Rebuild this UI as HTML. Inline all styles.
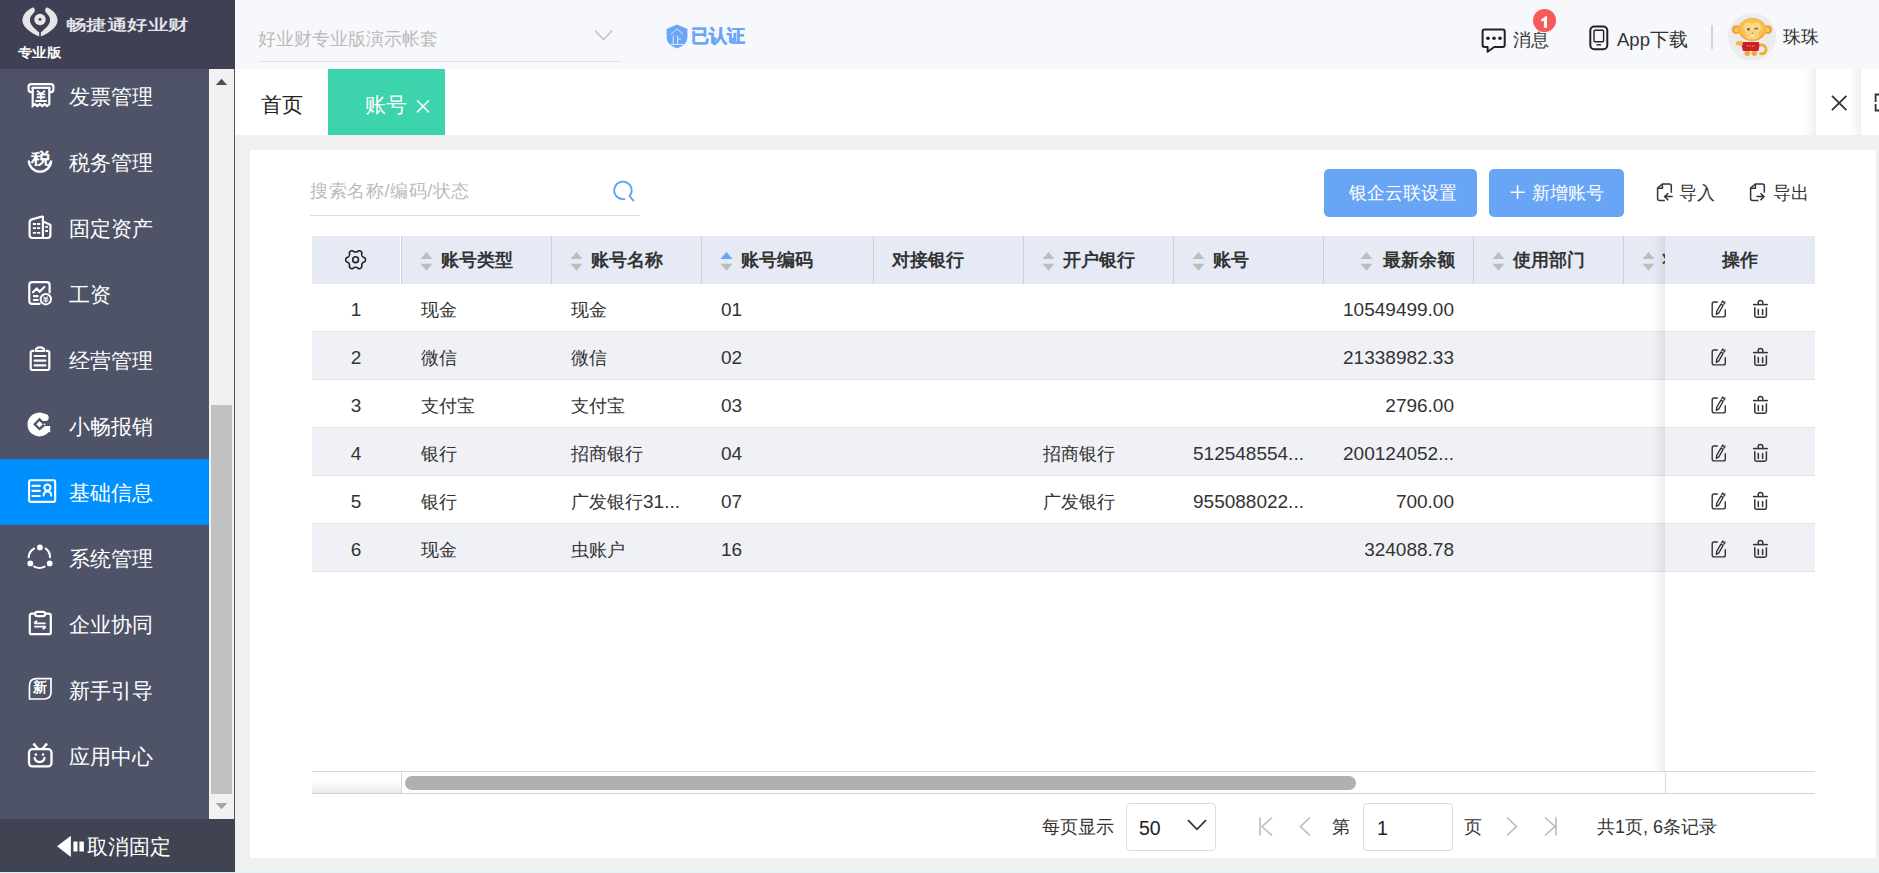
<!DOCTYPE html>
<html><head><meta charset="utf-8">
<style>
*{box-sizing:border-box}
html,body{margin:0;padding:0}
body{width:1879px;height:873px;overflow:hidden;position:relative;background:#f0f0f0;font-family:"Liberation Sans",sans-serif;color:#333}
.a{position:absolute;white-space:nowrap}
svg{position:absolute;overflow:visible}
#side{left:0;top:0;width:235px;height:873px;background:#4e5368}
.mi{position:absolute;left:0;width:209px;height:66px}
.mi .t{position:absolute;left:69px;top:1px;line-height:66px;font-size:21px;color:#fff;font-weight:500}
.mi svg{left:20px;top:12px;width:40px;height:40px}
#hdr{left:235px;top:0;width:1644px;height:69px;background:#f7f8fc}
#tabs{left:235px;top:69px;width:1644px;height:66px;background:#fff}
#card{left:250px;top:150px;width:1626px;height:708px;background:#fff}
.th{position:absolute;top:236px;height:48px;background:#e6eaf4}
.hd{position:absolute;top:236px;line-height:48px;font-size:18px;font-weight:bold;color:#333}
.row{position:absolute;left:312px;width:1353px;height:48px;border-bottom:1px solid #e4e4e4}
.c{position:absolute;font-size:18px;color:#333;line-height:48px}
</style></head>
<body>
<!-- SIDEBAR -->
<div id="side" class="a">
  <div class="a" style="left:0;top:0;width:235px;height:69px;background:#404055"></div>
  <!-- logo -->
  <svg style="left:20px;top:5px;width:40px;height:36px" viewBox="0 0 40 36">
    <path d="M12.2 2.7 C7.2 5 2.4 9.6 2.4 15.6 C2.4 21.6 10 27.6 19.1 31.6 L19.2 27.4 C13.4 22.6 9.9 19 9.9 15 C9.9 11.8 12.1 9.4 14.3 7.2 C15.6 5.2 14.4 2 12.2 2.7 Z" fill="#e6e6e9"/>
    <path d="M27.8 2.7 C32.8 5 37.6 9.6 37.6 15.6 C37.6 21.6 30 27.6 20.9 31.6 L20.8 27.4 C26.6 22.6 30.1 19 30.1 15 C30.1 11.8 27.9 9.4 25.7 7.2 C24.4 5.2 25.6 2 27.8 2.7 Z" fill="#e6e6e9"/>
    <circle cx="20" cy="14.5" r="5.7" fill="#e8e8ea"/>
    <circle cx="20" cy="14.5" r="1.4" fill="#404055"/>
  </svg>
  <div class="a" style="left:66px;top:12.5px;font-size:15px;line-height:24px;color:#ececef;font-weight:400;-webkit-text-stroke:0.35px #ececef;transform:scaleX(1.365);transform-origin:0 0">畅捷通好业财</div>
  <div class="a" style="left:18px;top:43px;font-size:13px;line-height:20px;color:#fff;font-weight:bold;transform:scaleX(1.11);transform-origin:0 0">专业版</div>

  <!-- menu items -->
  <div class="mi" style="top:63px">
    <svg viewBox="0 0 40 40" fill="none" stroke="#fff" stroke-width="2.2">
      <path d="M12 17.2 H10.8 A2.6 2.6 0 0 1 8.6 14.6 V11.8 A2.6 2.6 0 0 1 11.2 9.2 H30.8 A2.6 2.6 0 0 1 33.4 11.8 V14.6 A2.6 2.6 0 0 1 30.8 17.2 H30"/>
      <path d="M11.5 12.8 H30.5"/>
      <path d="M12.7 12.8 V31 L15 29.2 L17.4 31 L19.8 29.2 L22.2 31 L24.6 29.2 L27 31 L29.3 29.2 V12.8"/>
      <path d="M17 15.6 L21 19 L25 15.6 M16.8 19.4 H25.2 M16.8 22.2 H25.2 M21 19 V24.5 M15.2 26 H26.8" stroke-width="1.9"/>
    </svg>
    <div class="t">发票管理</div>
  </div>
  <div class="mi" style="top:129px">
    <svg viewBox="0 0 40 40" fill="none" stroke="#fff" stroke-width="2.3">
      <path d="M8.8 19.5 A11.2 11.2 0 0 0 31.2 19.5"/>
    </svg>
    <div class="a" style="left:31px;top:19.5px;font-size:16px;line-height:20px;color:#fff;font-weight:900;transform:scaleX(1.26);transform-origin:0 0">税</div>
    <div class="t">税务管理</div>
  </div>
  <div class="mi" style="top:195px">
    <svg viewBox="0 0 40 40" fill="none" stroke="#fff" stroke-width="2.2" stroke-linejoin="round">
      <path d="M22.9 9.3 L12 12.4 Q9.6 13 9.6 15.5 V28 Q9.6 31 12.6 31 H27.5 Q30.4 31 30.4 28 V17.8 L23 14.6"/>
      <path d="M22.9 9 V31"/>
      <path d="M12.8 17 H16 M17 17 H20.2 M12.8 21.1 H16 M17 21.1 H20.2 M12.8 25.9 H16 M17 25.9 H20.2 M25.2 19.9 H28 M25.2 24 H28" stroke-width="1.9"/>
    </svg>
    <div class="t">固定资产</div>
  </div>
  <div class="mi" style="top:261px">
    <svg viewBox="0 0 40 40" fill="none" stroke="#fff" stroke-width="2.2" stroke-linecap="round" stroke-linejoin="round">
      <path d="M19.6 30.8 H12 Q9.3 30.8 9.3 28 V12 Q9.3 9.1 12 9.1 H27 Q29.6 9.1 29.6 12 V19.5"/>
      <path d="M13 19.3 L16.7 15.4 L19.6 18.8 L24.3 14"/>
      <path d="M13 23.1 H18.5 M13 27 H18.5" stroke-linecap="butt"/>
      <circle cx="25.8" cy="26.2" r="5.2" stroke-width="2"/>
      <path d="M23.6 23.6 L25.8 25.6 L28 23.6 M23.3 26 H28.3 M23.3 28 H28.3 M25.8 25.6 V29.5" stroke-width="1.1" stroke-linecap="butt"/>
    </svg>
    <div class="t">工资</div>
  </div>
  <div class="mi" style="top:327px">
    <svg viewBox="0 0 40 40" fill="none" stroke="#fff" stroke-width="2.2" stroke-linejoin="round">
      <path d="M14 11.9 H12.6 Q10.7 11.9 10.7 13.9 V29 Q10.7 31 12.7 31 H27.3 Q29.3 31 29.3 29 V13.9 Q29.3 11.9 27.3 11.9 H26"/>
      <path d="M15.5 12 H24.5 Q24.2 8.3 20 8.3 Q15.8 8.3 15.5 12 Z"/>
      <path d="M14.6 17 H25.4 M14.6 21.6 H25.4 M14.6 26.4 H25.4" stroke-linecap="round"/>
    </svg>
    <div class="t">经营管理</div>
  </div>
  <div class="mi" style="top:393px">
    <svg viewBox="0 0 40 40">
      <path fill="#fff" d="M25.2 16.1 A3.5 3.5 0 0 0 25.2 9.1 A11.9 11.9 0 1 0 28.6 27 L30.2 27.6 V21 H24.8 L23.2 22.4 L19.5 25.6 L13.1 19.2 L19.5 12.8 L22.8 16.1 Z"/>
      <path fill="#fff" d="M19.5 16 L22.7 19.2 L19.5 22.4 L16.3 19.2 Z"/>
      <circle cx="24.4" cy="19.3" r="0.9" fill="#fff"/>
    </svg>
    <div class="t">小畅报销</div>
  </div>
  <div class="mi" style="top:459px;background:#008ffe">
    <svg viewBox="0 0 40 40" fill="none" stroke="#fff" stroke-width="2.1" stroke-linecap="round">
      <rect x="9.1" y="9.3" width="26.1" height="21.6" rx="1.4"/>
      <path d="M12.4 14.9 H19.8 M12.4 19.9 H19.8 M12.4 25 H19.8"/>
      <circle cx="27.4" cy="16.6" r="3.1"/>
      <path d="M23.6 24.6 Q23.6 20.5 27.4 20.5 Q31.2 20.5 31.2 24.6"/>
    </svg>
    <div class="t">基础信息</div>
  </div>
  <div class="mi" style="top:525px">
    <svg viewBox="0 0 40 40" fill="none" stroke="#fff" stroke-width="2.1" stroke-linecap="round">
      <circle cx="19.9" cy="10.4" r="2.9" fill="#fff" stroke="none"/>
      <circle cx="10.3" cy="26.4" r="2.9" fill="#fff" stroke="none"/>
      <circle cx="29.7" cy="26.4" r="2.9" fill="#fff" stroke="none"/>
      <path d="M14 11.6 A10.5 10.5 0 0 0 8.7 20.2"/>
      <path d="M25.8 11.6 A10.5 10.5 0 0 1 30 20.2"/>
      <path d="M14.2 29.6 Q19.5 32.3 24.6 29.6"/>
    </svg>
    <div class="t">系统管理</div>
  </div>
  <div class="mi" style="top:591px">
    <svg viewBox="0 0 40 40" fill="none" stroke="#fff" stroke-width="2.2" stroke-linejoin="round">
      <path d="M14.5 10.6 H12 Q9.8 10.6 9.8 12.8 V29.4 Q9.8 31.2 11.8 31.2 H28.8 Q30.8 31.2 30.8 29.4 V12.8 Q30.8 10.6 28.6 10.6 H25.8"/>
      <rect x="15.2" y="8.8" width="10" height="4.4" rx="2.2"/>
      <path d="M14.2 20.4 H25.7 M16.9 17.8 L14.2 20.4 M14.2 23.6 H25.7 M25.7 23.6 L23 26.2" stroke-width="1.9"/>
    </svg>
    <div class="t">企业协同</div>
  </div>
  <div class="mi" style="top:657px">
    <svg viewBox="0 0 40 40" fill="none" stroke="#fff" stroke-width="1.7">
      <path d="M16.5 9.6 H31 V23 Q31 30 24 30 H9.5 V16.6 Q9.5 9.6 16.5 9.6 Z"/>
    </svg>
    <div class="a" style="left:33px;top:17px;font-size:14px;line-height:26px;color:#fff;font-weight:bold">新</div>
    <div class="t">新手引导</div>
  </div>
  <div class="mi" style="top:723px">
    <svg viewBox="0 0 40 40" fill="none" stroke="#fff" stroke-width="2.3" stroke-linecap="round">
      <rect x="9" y="14.2" width="22.5" height="17.2" rx="3.4"/>
      <path d="M14.2 9.6 L17.8 13.6 M26.2 9.6 L22.6 13.6"/>
      <circle cx="14.2" cy="9.6" r="1.4" fill="#fff" stroke="none"/>
      <circle cx="26.2" cy="9.6" r="1.4" fill="#fff" stroke="none"/>
      <circle cx="15.9" cy="19.6" r="1.3" fill="#fff" stroke="none"/>
      <circle cx="23" cy="19.6" r="1.3" fill="#fff" stroke="none"/>
      <path d="M14.6 23 Q15.5 27 19.5 27 Q23.5 27 24.6 23"/>
    </svg>
    <div class="t">应用中心</div>
  </div>

  <!-- scrollbar -->
  <div class="a" style="left:209px;top:69px;width:25px;height:750px;background:#f1f1f1"></div>
  <div class="a" style="left:211px;top:405px;width:21px;height:389px;background:#c1c1c1"></div>
  <svg style="left:209px;top:69px;width:25px;height:750px" viewBox="0 0 25 750">
    <path d="M6.8 16 L12.5 9.8 L18.2 16 Z" fill="#505050"/>
    <path d="M6.8 734 L12.5 740.2 L18.2 734 Z" fill="#a3a3a3"/>
  </svg>
  <div class="a" style="left:234px;top:69px;width:1px;height:750px;background:#4e5368"></div>

  <!-- bottom -->
  <div class="a" style="left:0;top:819px;width:235px;height:54px;background:#3f4352"></div>
  <svg style="left:50px;top:830px;width:40px;height:30px" viewBox="0 0 40 30">
    <path d="M7 16.3 L20.9 5.8 V26.9 Z" fill="#fff"/>
    <rect x="23.4" y="11.5" width="4.1" height="10" fill="#fff"/>
    <rect x="29.4" y="11.5" width="4.5" height="10" fill="#fff"/>
  </svg>
  <div class="a" style="left:87px;top:833px;font-size:21px;line-height:28px;color:#fff">取消固定</div>
</div>

<!-- HEADER -->
<div id="hdr" class="a"></div>
<div class="a" style="left:258px;top:25px;font-size:18px;line-height:28px;color:#bbb">好业财专业版演示帐套</div>
<svg style="left:590px;top:25px;width:28px;height:20px" viewBox="0 0 28 20">
  <path d="M5 5.5 L13.5 14.5 L22.2 5.5" fill="none" stroke="#c2c2c2" stroke-width="1.6"/>
</svg>
<div class="a" style="left:258px;top:61px;width:364px;height:1px;background:#e2e2e2"></div>
<svg style="left:660px;top:20px;width:32px;height:32px" viewBox="0 0 32 32">
  <path d="M17 4.6 L27.4 9 V17 Q27.4 25 17 28.4 Q6.6 25 6.6 17 V9 Z" fill="#6aa6f6"/>
  <path d="M10.8 14.5 L17 8.7 L23.2 14.5 M13.2 24 V15.6 M17.6 15.6 V24 M17.6 19 H21 M10.6 24.5 H23.6" fill="none" stroke="#e8f0fd" stroke-width="0.9"/>
</svg>
<div class="a" style="left:691px;top:22px;font-size:18px;line-height:28px;color:#6aa6f6;font-weight:900;-webkit-text-stroke:0.5px #6aa6f6">已认证</div>

<!-- header right -->
<svg style="left:1476px;top:22px;width:36px;height:36px" viewBox="0 0 36 36">
  <path d="M11.6 25 H8.5 Q6.6 25 6.6 23 V9.5 Q6.6 7.5 8.5 7.5 H26.8 Q28.7 7.5 28.7 9.5 V23 Q28.7 25 26.8 25 H18.2 L11.6 29.8 Z" fill="none" stroke="#222" stroke-width="2" stroke-linejoin="round"/>
  <circle cx="12" cy="16.3" r="1.8" fill="#222"/><circle cx="18" cy="16.3" r="1.8" fill="#222"/><circle cx="24" cy="16.3" r="1.8" fill="#222"/>
</svg>
<div class="a" style="left:1513px;top:26px;font-size:18px;line-height:28px;color:#333">消息</div>
<div class="a" style="left:1533px;top:9px;width:23px;height:23px;border-radius:50%;background:#f85a5a"></div><svg style="left:1533px;top:9px;width:23px;height:23px" viewBox="0 0 23 23"><path d="M12.3 7.2 H14 V18.8 H10.9 V11.4 Q9.8 12.2 8.4 12.5 V10 Q11 9.3 12.3 7.2 Z" fill="#fff"/></svg>
<svg style="left:1584px;top:22px;width:30px;height:32px" viewBox="0 0 30 32">
  <rect x="6.3" y="4.6" width="17" height="22.6" rx="4" fill="none" stroke="#222" stroke-width="2"/>
  <rect x="10" y="8.2" width="9.6" height="11.6" rx="1" fill="none" stroke="#222" stroke-width="1.4"/>
  <path d="M12.5 22.8 H17.1" stroke="#222" stroke-width="1.4"/>
</svg>
<div class="a" style="left:1617px;top:26px;font-size:18.5px;line-height:28px;color:#333">App下载</div>
<div class="a" style="left:1711px;top:25px;width:2px;height:24px;background:#d4d4d4"></div>
<div class="a" style="left:1728px;top:13px;width:48px;height:48px;border-radius:50%;background:#ececec;overflow:hidden"></div>
<svg style="left:1728px;top:13px;width:48px;height:48px" viewBox="0 0 48 48">
  <circle cx="8.2" cy="16.6" r="4.4" fill="#f0a035"/><circle cx="8.8" cy="16.8" r="2.4" fill="#fbc46a"/>
  <circle cx="39.8" cy="16.6" r="4.4" fill="#f0a035"/><circle cx="39.2" cy="16.8" r="2.4" fill="#fbc46a"/>
  <path d="M31 32 Q38.5 31 38 37.5 Q36.5 42 31.5 40.5" stroke="#f3a83c" stroke-width="2.6" fill="none"/>
  <ellipse cx="19.3" cy="40.3" rx="2.8" ry="2.6" fill="#f3a83c"/><ellipse cx="26.3" cy="40.3" rx="2.8" ry="2.6" fill="#f3a83c"/>
  <path d="M14 29 H31 Q32 33 30.5 38 H15 Q13 33 14 29 Z" fill="#c91f2c"/>
  <ellipse cx="11.4" cy="30.3" rx="3.6" ry="2.3" fill="#f7b443"/>
  <ellipse cx="24.3" cy="16.6" rx="14" ry="11.6" fill="#f6ae3c"/>
  <ellipse cx="24.3" cy="15.6" rx="12.4" ry="10" fill="#f9bf52"/>
  <ellipse cx="20.6" cy="14.5" rx="5.2" ry="5.2" fill="#fcd97f"/>
  <ellipse cx="28" cy="14.5" rx="5.2" ry="5.2" fill="#fcd97f"/>
  <ellipse cx="24.3" cy="22" rx="7.2" ry="4.6" fill="#fcd27a"/>
  <circle cx="20.5" cy="16.2" r="1.3" fill="#6b4a78"/>
  <path d="M26.4 16.3 Q28.2 14.6 30 16.3" stroke="#6b4a78" stroke-width="1.1" fill="none"/>
  <path d="M21.8 21.8 Q24.3 25.2 26.8 21.8 Z" fill="#fff"/>
  <circle cx="24.3" cy="20.3" r="0.9" fill="#e98a3a"/>
  <path d="M19 33 H27" stroke="#e8a0a0" stroke-width="1" stroke-dasharray="1.5 1"/>
</svg>
<div class="a" style="left:1783px;top:23px;font-size:18px;line-height:28px;color:#333">珠珠</div>

<!-- TABS -->
<div id="tabs" class="a"></div>
<div class="a" style="left:261px;top:90px;font-size:21px;line-height:30px;color:#222">首页</div>
<div class="a" style="left:328px;top:69px;width:117px;height:66px;background:#3cd3ad"></div>
<div class="a" style="left:365px;top:90px;font-size:21px;line-height:30px;color:#fff">账号</div>
<svg style="left:412px;top:96px;width:22px;height:22px" viewBox="0 0 22 22">
  <path d="M5 4.2 L17 16.4 M17 4.2 L5 16.4" stroke="#fff" stroke-width="1.5"/>
</svg>
<div class="a" style="left:1804px;top:69px;width:12px;height:66px;background:linear-gradient(90deg,rgba(0,0,0,0),rgba(0,0,0,0.06))"></div>
<div class="a" style="left:1816px;top:69px;width:34px;height:66px;background:#fff"></div>
<div class="a" style="left:1850px;top:69px;width:11px;height:66px;background:linear-gradient(90deg,rgba(0,0,0,0),rgba(0,0,0,0.06))"></div>
<div class="a" style="left:1861px;top:69px;width:18px;height:66px;background:#fff"></div>
<svg style="left:1828px;top:92px;width:22px;height:22px" viewBox="0 0 22 22">
  <path d="M4 3.8 L18.4 18.2 M18.4 3.8 L4 18.2" stroke="#333" stroke-width="1.8"/>
</svg>
<svg style="left:1870px;top:90px;width:12px;height:26px" viewBox="0 0 12 26">
  <path d="M9 4.5 H5.6 V12 M5.6 14 V20.5 H9" fill="none" stroke="#333" stroke-width="1.8"/>
</svg>

<!-- CARD -->
<div id="card" class="a"></div>
<div class="a" style="left:310px;top:177px;font-size:18px;line-height:28px;color:#bbb;letter-spacing:0.6px">搜索名称/编码/状态</div>
<svg style="left:608px;top:176px;width:30px;height:30px" viewBox="0 0 30 30"><path d="M16.4 23 A8.7 8.7 0 1 1 21.6 20 L25.4 24.6" fill="none" stroke="#5f9ef6" stroke-width="1.8" stroke-linecap="round"/></svg>
<div class="a" style="left:310px;top:215px;width:330px;height:1px;background:#dcdcdc"></div>

<div class="a" style="left:1324px;top:169px;width:153px;height:48px;border-radius:5px;background:#68a5f5"></div>
<div class="a" style="left:1349px;top:178px;font-size:18px;line-height:30px;color:#fff">银企云联设置</div>
<div class="a" style="left:1489px;top:169px;width:135px;height:48px;border-radius:5px;background:#68a5f5"></div>
<svg style="left:1500px;top:175px;width:40px;height:35px" viewBox="0 0 40 35"><path d="M10.6 17.2 H24.8 M17.6 10.2 V23.8" stroke="#fff" stroke-width="1.6"/></svg>
<div class="a" style="left:1532px;top:178px;font-size:18px;line-height:30px;color:#fff">新增账号</div>

<svg style="left:1650px;top:177px;width:28px;height:30px" viewBox="0 0 28 30"><g fill="none" stroke="#333" stroke-width="1.5"><path d="M14.8 23.4 H9.6 Q7.6 23.4 7.6 21.4 V11 L12.4 6.9 H19.3 Q21.3 6.9 21.3 8.9 V15.7"/><path d="M12.4 6.9 V11.3 H7.6"/><path d="M22.7 19.6 H14.6 M18.3 16.2 L14.6 19.6 L18.3 23.3"/></g></svg>
<div class="a" style="left:1679px;top:179px;font-size:18px;line-height:28px;color:#333">导入</div>
<svg style="left:1743px;top:177px;width:28px;height:30px" viewBox="0 0 28 30"><g fill="none" stroke="#333" stroke-width="1.5"><path d="M15.5 23.4 H9.6 Q7.6 23.4 7.6 21.4 V11 L12.4 6.9 H19.3 Q21.3 6.9 21.3 8.9 V15.7"/><path d="M12.4 6.9 V11.3 H7.6"/><path d="M13.4 19.6 H21 M17.5 16.2 L21 19.6 L17.5 23.2"/></g></svg>
<div class="a" style="left:1773px;top:179px;font-size:18px;line-height:28px;color:#333">导出</div>

<!-- TABLE -->
<div class="th" style="left:312px;width:1503px"></div>
<!--TBL-->
<div class="a" style="left:312px;top:284px;width:1503px;height:48px;background:#fff"></div>
<div class="a" style="left:312px;top:331px;width:1503px;height:1px;background:#e3e3e3"></div>
<div class="a" style="left:312px;top:332px;width:1503px;height:48px;background:#f0f1f6"></div>
<div class="a" style="left:312px;top:379px;width:1503px;height:1px;background:#e3e3e3"></div>
<div class="a" style="left:312px;top:380px;width:1503px;height:48px;background:#fff"></div>
<div class="a" style="left:312px;top:427px;width:1503px;height:1px;background:#e3e3e3"></div>
<div class="a" style="left:312px;top:428px;width:1503px;height:48px;background:#f0f1f6"></div>
<div class="a" style="left:312px;top:475px;width:1503px;height:1px;background:#e3e3e3"></div>
<div class="a" style="left:312px;top:476px;width:1503px;height:48px;background:#fff"></div>
<div class="a" style="left:312px;top:523px;width:1503px;height:1px;background:#e3e3e3"></div>
<div class="a" style="left:312px;top:524px;width:1503px;height:48px;background:#f0f1f6"></div>
<div class="a" style="left:312px;top:571px;width:1503px;height:1px;background:#e3e3e3"></div>
<div class="a" style="left:400px;top:236px;width:1px;height:48px;background:#fff"></div>
<div class="a" style="left:401px;top:236px;width:1px;height:48px;background:#cdd0d8"></div>
<div class="a" style="left:551px;top:236px;width:1px;height:48px;background:#cdd0d8"></div>
<div class="a" style="left:701px;top:236px;width:1px;height:48px;background:#cdd0d8"></div>
<div class="a" style="left:873px;top:236px;width:1px;height:48px;background:#cdd0d8"></div>
<div class="a" style="left:1023px;top:236px;width:1px;height:48px;background:#cdd0d8"></div>
<div class="a" style="left:1173px;top:236px;width:1px;height:48px;background:#cdd0d8"></div>
<div class="a" style="left:1323px;top:236px;width:1px;height:48px;background:#cdd0d8"></div>
<div class="a" style="left:1473px;top:236px;width:1px;height:48px;background:#cdd0d8"></div>
<div class="a" style="left:1623px;top:236px;width:1px;height:48px;background:#cdd0d8"></div>
<div class="a" style="left:551px;top:331px;width:1px;height:1px;background:#f4f4f4"></div>
<div class="a" style="left:551px;top:379px;width:1px;height:1px;background:#f4f4f4"></div>
<div class="a" style="left:551px;top:427px;width:1px;height:1px;background:#f4f4f4"></div>
<div class="a" style="left:551px;top:475px;width:1px;height:1px;background:#f4f4f4"></div>
<div class="a" style="left:551px;top:523px;width:1px;height:1px;background:#f4f4f4"></div>
<div class="a" style="left:551px;top:571px;width:1px;height:1px;background:#f4f4f4"></div>
<div class="a" style="left:701px;top:331px;width:1px;height:1px;background:#f4f4f4"></div>
<div class="a" style="left:701px;top:379px;width:1px;height:1px;background:#f4f4f4"></div>
<div class="a" style="left:701px;top:427px;width:1px;height:1px;background:#f4f4f4"></div>
<div class="a" style="left:701px;top:475px;width:1px;height:1px;background:#f4f4f4"></div>
<div class="a" style="left:701px;top:523px;width:1px;height:1px;background:#f4f4f4"></div>
<div class="a" style="left:701px;top:571px;width:1px;height:1px;background:#f4f4f4"></div>
<div class="a" style="left:873px;top:331px;width:1px;height:1px;background:#f4f4f4"></div>
<div class="a" style="left:873px;top:379px;width:1px;height:1px;background:#f4f4f4"></div>
<div class="a" style="left:873px;top:427px;width:1px;height:1px;background:#f4f4f4"></div>
<div class="a" style="left:873px;top:475px;width:1px;height:1px;background:#f4f4f4"></div>
<div class="a" style="left:873px;top:523px;width:1px;height:1px;background:#f4f4f4"></div>
<div class="a" style="left:873px;top:571px;width:1px;height:1px;background:#f4f4f4"></div>
<div class="a" style="left:1023px;top:331px;width:1px;height:1px;background:#f4f4f4"></div>
<div class="a" style="left:1023px;top:379px;width:1px;height:1px;background:#f4f4f4"></div>
<div class="a" style="left:1023px;top:427px;width:1px;height:1px;background:#f4f4f4"></div>
<div class="a" style="left:1023px;top:475px;width:1px;height:1px;background:#f4f4f4"></div>
<div class="a" style="left:1023px;top:523px;width:1px;height:1px;background:#f4f4f4"></div>
<div class="a" style="left:1023px;top:571px;width:1px;height:1px;background:#f4f4f4"></div>
<div class="a" style="left:1173px;top:331px;width:1px;height:1px;background:#f4f4f4"></div>
<div class="a" style="left:1173px;top:379px;width:1px;height:1px;background:#f4f4f4"></div>
<div class="a" style="left:1173px;top:427px;width:1px;height:1px;background:#f4f4f4"></div>
<div class="a" style="left:1173px;top:475px;width:1px;height:1px;background:#f4f4f4"></div>
<div class="a" style="left:1173px;top:523px;width:1px;height:1px;background:#f4f4f4"></div>
<div class="a" style="left:1173px;top:571px;width:1px;height:1px;background:#f4f4f4"></div>
<div class="a" style="left:1323px;top:331px;width:1px;height:1px;background:#f4f4f4"></div>
<div class="a" style="left:1323px;top:379px;width:1px;height:1px;background:#f4f4f4"></div>
<div class="a" style="left:1323px;top:427px;width:1px;height:1px;background:#f4f4f4"></div>
<div class="a" style="left:1323px;top:475px;width:1px;height:1px;background:#f4f4f4"></div>
<div class="a" style="left:1323px;top:523px;width:1px;height:1px;background:#f4f4f4"></div>
<div class="a" style="left:1323px;top:571px;width:1px;height:1px;background:#f4f4f4"></div>
<div class="a" style="left:1473px;top:331px;width:1px;height:1px;background:#f4f4f4"></div>
<div class="a" style="left:1473px;top:379px;width:1px;height:1px;background:#f4f4f4"></div>
<div class="a" style="left:1473px;top:427px;width:1px;height:1px;background:#f4f4f4"></div>
<div class="a" style="left:1473px;top:475px;width:1px;height:1px;background:#f4f4f4"></div>
<div class="a" style="left:1473px;top:523px;width:1px;height:1px;background:#f4f4f4"></div>
<div class="a" style="left:1473px;top:571px;width:1px;height:1px;background:#f4f4f4"></div>
<div class="a" style="left:1623px;top:331px;width:1px;height:1px;background:#f4f4f4"></div>
<div class="a" style="left:1623px;top:379px;width:1px;height:1px;background:#f4f4f4"></div>
<div class="a" style="left:1623px;top:427px;width:1px;height:1px;background:#f4f4f4"></div>
<div class="a" style="left:1623px;top:475px;width:1px;height:1px;background:#f4f4f4"></div>
<div class="a" style="left:1623px;top:523px;width:1px;height:1px;background:#f4f4f4"></div>
<div class="a" style="left:1623px;top:571px;width:1px;height:1px;background:#f4f4f4"></div>
<svg style="left:343px;top:248px;width:26px;height:26px" viewBox="0 0 26 26"><path d="M22.50 11.70 L22.47 12.13 L22.37 12.55 L22.20 12.96 L21.96 13.35 L21.64 13.70 L21.05 13.96 L20.46 14.18 L20.11 14.43 L19.82 14.69 L19.57 14.95 L19.36 15.22 L19.18 15.50 L19.03 15.80 L18.90 16.11 L18.80 16.46 L18.72 16.84 L18.67 17.27 L18.79 17.89 L18.86 18.53 L18.71 18.98 L18.50 19.38 L18.22 19.73 L17.91 20.03 L17.55 20.27 L17.16 20.46 L16.74 20.59 L16.31 20.65 L15.85 20.64 L15.38 20.53 L14.86 20.15 L14.38 19.74 L13.99 19.57 L13.62 19.45 L13.27 19.37 L12.93 19.32 L12.60 19.30 L12.27 19.32 L11.93 19.37 L11.58 19.45 L11.21 19.57 L10.82 19.74 L10.34 20.15 L9.82 20.53 L9.35 20.64 L8.89 20.65 L8.46 20.59 L8.04 20.46 L7.65 20.27 L7.29 20.03 L6.98 19.73 L6.70 19.38 L6.49 18.98 L6.34 18.53 L6.41 17.89 L6.53 17.27 L6.48 16.84 L6.40 16.46 L6.30 16.11 L6.17 15.80 L6.02 15.50 L5.84 15.22 L5.63 14.95 L5.38 14.69 L5.09 14.43 L4.74 14.18 L4.15 13.96 L3.56 13.70 L3.24 13.35 L3.00 12.96 L2.83 12.55 L2.73 12.13 L2.70 11.70 L2.73 11.27 L2.83 10.85 L3.00 10.44 L3.24 10.05 L3.56 9.70 L4.15 9.44 L4.74 9.22 L5.09 8.97 L5.38 8.71 L5.63 8.45 L5.84 8.18 L6.02 7.90 L6.17 7.60 L6.30 7.29 L6.40 6.94 L6.48 6.56 L6.53 6.13 L6.41 5.51 L6.34 4.87 L6.49 4.42 L6.70 4.02 L6.98 3.67 L7.29 3.37 L7.65 3.13 L8.04 2.94 L8.46 2.81 L8.89 2.75 L9.35 2.76 L9.82 2.87 L10.34 3.25 L10.82 3.66 L11.21 3.83 L11.58 3.95 L11.93 4.03 L12.27 4.08 L12.60 4.10 L12.93 4.08 L13.27 4.03 L13.62 3.95 L13.99 3.83 L14.38 3.66 L14.86 3.25 L15.38 2.87 L15.85 2.76 L16.31 2.75 L16.74 2.81 L17.16 2.94 L17.55 3.13 L17.91 3.37 L18.22 3.67 L18.50 4.02 L18.71 4.42 L18.86 4.87 L18.79 5.51 L18.67 6.13 L18.72 6.56 L18.80 6.94 L18.90 7.29 L19.03 7.60 L19.18 7.90 L19.36 8.18 L19.57 8.45 L19.82 8.71 L20.11 8.97 L20.46 9.22 L21.05 9.44 L21.64 9.70 L21.96 10.05 L22.20 10.44 L22.37 10.85 L22.47 11.27 Z" fill="none" stroke="#222" stroke-width="1.6" stroke-linejoin="round"/><circle cx="12.6" cy="11.7" r="2.9" fill="none" stroke="#222" stroke-width="1.6"/></svg>
<svg style="left:420px;top:251px;width:13px;height:21px" viewBox="0 0 13 21"><path d="M0.5 8 L6.5 1 L12.5 8 Z" fill="#bdbdbd"/><path d="M0.5 12.8 L6.5 19.8 L12.5 12.8 Z" fill="#bdbdbd"/></svg>
<div class="hd" style="left:441px">账号类型</div>
<svg style="left:570px;top:251px;width:13px;height:21px" viewBox="0 0 13 21"><path d="M0.5 8 L6.5 1 L12.5 8 Z" fill="#bdbdbd"/><path d="M0.5 12.8 L6.5 19.8 L12.5 12.8 Z" fill="#bdbdbd"/></svg>
<div class="hd" style="left:591px">账号名称</div>
<svg style="left:720px;top:251px;width:13px;height:21px" viewBox="0 0 13 21"><path d="M0.5 8 L6.5 1 L12.5 8 Z" fill="#67a4f6"/><path d="M0.5 12.8 L6.5 19.8 L12.5 12.8 Z" fill="#bdbdbd"/></svg>
<div class="hd" style="left:741px">账号编码</div>
<div class="hd" style="left:892px">对接银行</div>
<svg style="left:1042px;top:251px;width:13px;height:21px" viewBox="0 0 13 21"><path d="M0.5 8 L6.5 1 L12.5 8 Z" fill="#bdbdbd"/><path d="M0.5 12.8 L6.5 19.8 L12.5 12.8 Z" fill="#bdbdbd"/></svg>
<div class="hd" style="left:1063px">开户银行</div>
<svg style="left:1192px;top:251px;width:13px;height:21px" viewBox="0 0 13 21"><path d="M0.5 8 L6.5 1 L12.5 8 Z" fill="#bdbdbd"/><path d="M0.5 12.8 L6.5 19.8 L12.5 12.8 Z" fill="#bdbdbd"/></svg>
<div class="hd" style="left:1213px">账号</div>
<div class="hd" style="left:1323px;width:132px;text-align:right">最新余额</div>
<svg style="left:1360px;top:251px;width:13px;height:21px" viewBox="0 0 13 21"><path d="M0.5 8 L6.5 1 L12.5 8 Z" fill="#bdbdbd"/><path d="M0.5 12.8 L6.5 19.8 L12.5 12.8 Z" fill="#bdbdbd"/></svg>
<svg style="left:1492px;top:251px;width:13px;height:21px" viewBox="0 0 13 21"><path d="M0.5 8 L6.5 1 L12.5 8 Z" fill="#bdbdbd"/><path d="M0.5 12.8 L6.5 19.8 L12.5 12.8 Z" fill="#bdbdbd"/></svg>
<div class="hd" style="left:1513px">使用部门</div>
<svg style="left:1642px;top:251px;width:13px;height:21px" viewBox="0 0 13 21"><path d="M0.5 8 L6.5 1 L12.5 8 Z" fill="#bdbdbd"/><path d="M0.5 12.8 L6.5 19.8 L12.5 12.8 Z" fill="#bdbdbd"/></svg>
<div class="hd" style="left:1663px">状态</div>
<div class="c" style="left:312px;top:286px;width:88px;text-align:center"><span style="font-size:19px">1</span></div>
<div class="c" style="left:421px;top:286px">现金</div>
<div class="c" style="left:571px;top:286px">现金</div>
<div class="c" style="left:721px;top:286px"><span style="font-size:19px">01</span></div>
<div class="c" style="left:1323px;top:286px;width:131px;text-align:right"><span style="font-size:19px">10549499.00</span></div>
<div class="c" style="left:312px;top:334px;width:88px;text-align:center"><span style="font-size:19px">2</span></div>
<div class="c" style="left:421px;top:334px">微信</div>
<div class="c" style="left:571px;top:334px">微信</div>
<div class="c" style="left:721px;top:334px"><span style="font-size:19px">02</span></div>
<div class="c" style="left:1323px;top:334px;width:131px;text-align:right"><span style="font-size:19px">21338982.33</span></div>
<div class="c" style="left:312px;top:382px;width:88px;text-align:center"><span style="font-size:19px">3</span></div>
<div class="c" style="left:421px;top:382px">支付宝</div>
<div class="c" style="left:571px;top:382px">支付宝</div>
<div class="c" style="left:721px;top:382px"><span style="font-size:19px">03</span></div>
<div class="c" style="left:1323px;top:382px;width:131px;text-align:right"><span style="font-size:19px">2796.00</span></div>
<div class="c" style="left:312px;top:430px;width:88px;text-align:center"><span style="font-size:19px">4</span></div>
<div class="c" style="left:421px;top:430px">银行</div>
<div class="c" style="left:571px;top:430px">招商银行</div>
<div class="c" style="left:721px;top:430px"><span style="font-size:19px">04</span></div>
<div class="c" style="left:1043px;top:430px">招商银行</div>
<div class="c" style="left:1193px;top:430px"><span style="font-size:19px">512548554...</span></div>
<div class="c" style="left:1323px;top:430px;width:131px;text-align:right"><span style="font-size:19px">200124052...</span></div>
<div class="c" style="left:312px;top:478px;width:88px;text-align:center"><span style="font-size:19px">5</span></div>
<div class="c" style="left:421px;top:478px">银行</div>
<div class="c" style="left:571px;top:478px">广发银行<span style="font-size:19px">31...</span></div>
<div class="c" style="left:721px;top:478px"><span style="font-size:19px">07</span></div>
<div class="c" style="left:1043px;top:478px">广发银行</div>
<div class="c" style="left:1193px;top:478px"><span style="font-size:19px">955088022...</span></div>
<div class="c" style="left:1323px;top:478px;width:131px;text-align:right"><span style="font-size:19px">700.00</span></div>
<div class="c" style="left:312px;top:526px;width:88px;text-align:center"><span style="font-size:19px">6</span></div>
<div class="c" style="left:421px;top:526px">现金</div>
<div class="c" style="left:571px;top:526px">虫账户</div>
<div class="c" style="left:721px;top:526px"><span style="font-size:19px">16</span></div>
<div class="c" style="left:1323px;top:526px;width:131px;text-align:right"><span style="font-size:19px">324088.78</span></div>
<div class="a" style="left:1653px;top:236px;width:12px;height:535px;background:linear-gradient(90deg,rgba(0,0,0,0),rgba(0,0,0,0.07))"></div>
<div class="a" style="left:1665px;top:236px;width:150px;height:48px;background:#e6eaf4"></div>
<div class="hd" style="left:1665px;width:150px;text-align:center">操作</div>
<div class="a" style="left:1665px;top:284px;width:150px;height:47px;background:#fff"></div>
<div class="a" style="left:1665px;top:331px;width:150px;height:1px;background:#e3e3e3"></div>
<svg style="left:1708px;top:298px;width:22px;height:22px" viewBox="0 0 22 22"><g fill="none" stroke="#333" stroke-width="1.4"><path d="M9.8 4 H6.2 Q4.2 4 4.2 6 V16.9 Q4.2 18.9 6.2 18.9 H15.3 Q17.3 18.9 17.3 16.9 V11.2"/><path d="M8.4 16.3 L8.6 13.5 L12.9 6.2 L15.1 7.5 L10.8 14.8 Z" stroke-linejoin="round"/><path d="M13.4 5.3 L14.7 3.1 L16.9 4.4 L15.6 6.6"/></g></svg>
<svg style="left:1750px;top:298px;width:22px;height:22px" viewBox="0 0 22 22"><g fill="none" stroke="#333" stroke-width="1.5"><path d="M3 6.6 H17.9"/><path d="M8.2 6.4 V4.8 Q8.2 2.6 10.5 2.6 Q12.8 2.6 12.8 4.8 V6.4"/><path d="M4.8 9.3 V17.6 Q4.8 19.3 6.5 19.3 H14.7 Q16.4 19.3 16.4 17.6 V9.3"/><path d="M8.3 11.4 V16.4 M12.6 11.4 V16.4" stroke-linecap="round"/></g></svg>
<div class="a" style="left:1665px;top:332px;width:150px;height:47px;background:#f0f1f6"></div>
<div class="a" style="left:1665px;top:379px;width:150px;height:1px;background:#e3e3e3"></div>
<svg style="left:1708px;top:346px;width:22px;height:22px" viewBox="0 0 22 22"><g fill="none" stroke="#333" stroke-width="1.4"><path d="M9.8 4 H6.2 Q4.2 4 4.2 6 V16.9 Q4.2 18.9 6.2 18.9 H15.3 Q17.3 18.9 17.3 16.9 V11.2"/><path d="M8.4 16.3 L8.6 13.5 L12.9 6.2 L15.1 7.5 L10.8 14.8 Z" stroke-linejoin="round"/><path d="M13.4 5.3 L14.7 3.1 L16.9 4.4 L15.6 6.6"/></g></svg>
<svg style="left:1750px;top:346px;width:22px;height:22px" viewBox="0 0 22 22"><g fill="none" stroke="#333" stroke-width="1.5"><path d="M3 6.6 H17.9"/><path d="M8.2 6.4 V4.8 Q8.2 2.6 10.5 2.6 Q12.8 2.6 12.8 4.8 V6.4"/><path d="M4.8 9.3 V17.6 Q4.8 19.3 6.5 19.3 H14.7 Q16.4 19.3 16.4 17.6 V9.3"/><path d="M8.3 11.4 V16.4 M12.6 11.4 V16.4" stroke-linecap="round"/></g></svg>
<div class="a" style="left:1665px;top:380px;width:150px;height:47px;background:#fff"></div>
<div class="a" style="left:1665px;top:427px;width:150px;height:1px;background:#e3e3e3"></div>
<svg style="left:1708px;top:394px;width:22px;height:22px" viewBox="0 0 22 22"><g fill="none" stroke="#333" stroke-width="1.4"><path d="M9.8 4 H6.2 Q4.2 4 4.2 6 V16.9 Q4.2 18.9 6.2 18.9 H15.3 Q17.3 18.9 17.3 16.9 V11.2"/><path d="M8.4 16.3 L8.6 13.5 L12.9 6.2 L15.1 7.5 L10.8 14.8 Z" stroke-linejoin="round"/><path d="M13.4 5.3 L14.7 3.1 L16.9 4.4 L15.6 6.6"/></g></svg>
<svg style="left:1750px;top:394px;width:22px;height:22px" viewBox="0 0 22 22"><g fill="none" stroke="#333" stroke-width="1.5"><path d="M3 6.6 H17.9"/><path d="M8.2 6.4 V4.8 Q8.2 2.6 10.5 2.6 Q12.8 2.6 12.8 4.8 V6.4"/><path d="M4.8 9.3 V17.6 Q4.8 19.3 6.5 19.3 H14.7 Q16.4 19.3 16.4 17.6 V9.3"/><path d="M8.3 11.4 V16.4 M12.6 11.4 V16.4" stroke-linecap="round"/></g></svg>
<div class="a" style="left:1665px;top:428px;width:150px;height:47px;background:#f0f1f6"></div>
<div class="a" style="left:1665px;top:475px;width:150px;height:1px;background:#e3e3e3"></div>
<svg style="left:1708px;top:442px;width:22px;height:22px" viewBox="0 0 22 22"><g fill="none" stroke="#333" stroke-width="1.4"><path d="M9.8 4 H6.2 Q4.2 4 4.2 6 V16.9 Q4.2 18.9 6.2 18.9 H15.3 Q17.3 18.9 17.3 16.9 V11.2"/><path d="M8.4 16.3 L8.6 13.5 L12.9 6.2 L15.1 7.5 L10.8 14.8 Z" stroke-linejoin="round"/><path d="M13.4 5.3 L14.7 3.1 L16.9 4.4 L15.6 6.6"/></g></svg>
<svg style="left:1750px;top:442px;width:22px;height:22px" viewBox="0 0 22 22"><g fill="none" stroke="#333" stroke-width="1.5"><path d="M3 6.6 H17.9"/><path d="M8.2 6.4 V4.8 Q8.2 2.6 10.5 2.6 Q12.8 2.6 12.8 4.8 V6.4"/><path d="M4.8 9.3 V17.6 Q4.8 19.3 6.5 19.3 H14.7 Q16.4 19.3 16.4 17.6 V9.3"/><path d="M8.3 11.4 V16.4 M12.6 11.4 V16.4" stroke-linecap="round"/></g></svg>
<div class="a" style="left:1665px;top:476px;width:150px;height:47px;background:#fff"></div>
<div class="a" style="left:1665px;top:523px;width:150px;height:1px;background:#e3e3e3"></div>
<svg style="left:1708px;top:490px;width:22px;height:22px" viewBox="0 0 22 22"><g fill="none" stroke="#333" stroke-width="1.4"><path d="M9.8 4 H6.2 Q4.2 4 4.2 6 V16.9 Q4.2 18.9 6.2 18.9 H15.3 Q17.3 18.9 17.3 16.9 V11.2"/><path d="M8.4 16.3 L8.6 13.5 L12.9 6.2 L15.1 7.5 L10.8 14.8 Z" stroke-linejoin="round"/><path d="M13.4 5.3 L14.7 3.1 L16.9 4.4 L15.6 6.6"/></g></svg>
<svg style="left:1750px;top:490px;width:22px;height:22px" viewBox="0 0 22 22"><g fill="none" stroke="#333" stroke-width="1.5"><path d="M3 6.6 H17.9"/><path d="M8.2 6.4 V4.8 Q8.2 2.6 10.5 2.6 Q12.8 2.6 12.8 4.8 V6.4"/><path d="M4.8 9.3 V17.6 Q4.8 19.3 6.5 19.3 H14.7 Q16.4 19.3 16.4 17.6 V9.3"/><path d="M8.3 11.4 V16.4 M12.6 11.4 V16.4" stroke-linecap="round"/></g></svg>
<div class="a" style="left:1665px;top:524px;width:150px;height:47px;background:#f0f1f6"></div>
<div class="a" style="left:1665px;top:571px;width:150px;height:1px;background:#e3e3e3"></div>
<svg style="left:1708px;top:538px;width:22px;height:22px" viewBox="0 0 22 22"><g fill="none" stroke="#333" stroke-width="1.4"><path d="M9.8 4 H6.2 Q4.2 4 4.2 6 V16.9 Q4.2 18.9 6.2 18.9 H15.3 Q17.3 18.9 17.3 16.9 V11.2"/><path d="M8.4 16.3 L8.6 13.5 L12.9 6.2 L15.1 7.5 L10.8 14.8 Z" stroke-linejoin="round"/><path d="M13.4 5.3 L14.7 3.1 L16.9 4.4 L15.6 6.6"/></g></svg>
<svg style="left:1750px;top:538px;width:22px;height:22px" viewBox="0 0 22 22"><g fill="none" stroke="#333" stroke-width="1.5"><path d="M3 6.6 H17.9"/><path d="M8.2 6.4 V4.8 Q8.2 2.6 10.5 2.6 Q12.8 2.6 12.8 4.8 V6.4"/><path d="M4.8 9.3 V17.6 Q4.8 19.3 6.5 19.3 H14.7 Q16.4 19.3 16.4 17.6 V9.3"/><path d="M8.3 11.4 V16.4 M12.6 11.4 V16.4" stroke-linecap="round"/></g></svg>
<div class="a" style="left:1664px;top:571px;width:1px;height:200px;background:#eee"></div>
<div class="a" style="left:312px;top:771px;width:1503px;height:1px;background:#d8d8d8"></div>
<div class="a" style="left:312px;top:793px;width:1503px;height:1px;background:#d0d0d0"></div>
<div class="a" style="left:312px;top:772px;width:89px;height:21px;background:linear-gradient(#fff 40%,#ececec)"></div>
<div class="a" style="left:401px;top:772px;width:1px;height:21px;background:#d8d8d8"></div>
<div class="a" style="left:402px;top:772px;width:1263px;height:21px;background:#fff"></div>
<div class="a" style="left:405px;top:776px;width:951px;height:14px;border-radius:7px;background:#b0b0b0"></div>
<div class="a" style="left:1665px;top:772px;width:1px;height:21px;background:#d8d8d8"></div>
<div class="a" style="left:1042px;top:813px;font-size:18px;line-height:28px;color:#333">每页显示</div>
<div class="a" style="left:1126px;top:803px;width:90px;height:48px;border:1px solid #dcdcdc;border-radius:4px;background:#fff"></div>
<div class="a" style="left:1139px;top:814px;font-size:19.5px;line-height:28px;color:#222">50</div>
<svg style="left:1183px;top:812px;width:28px;height:24px" viewBox="0 0 28 24"><path d="M5 8.2 L14 17.4 L23 8.2" fill="none" stroke="#333" stroke-width="1.7"/></svg>
<svg style="left:1252px;top:812px;width:28px;height:30px" viewBox="0 0 28 30"><path d="M8 5.5 V23.5 M20 5.5 L10 14.5 L20 23.5" fill="none" stroke="#bbb" stroke-width="1.6"/></svg>
<svg style="left:1293px;top:812px;width:24px;height:30px" viewBox="0 0 24 30"><path d="M17 5.5 L7.5 14.5 L17 23.5" fill="none" stroke="#bbb" stroke-width="1.6"/></svg>
<div class="a" style="left:1332px;top:813px;font-size:18px;line-height:28px;color:#333">第</div>
<div class="a" style="left:1363px;top:803px;width:90px;height:48px;border:1px solid #dcdcdc;border-radius:4px;background:#fff"></div>
<div class="a" style="left:1377px;top:814px;font-size:19.5px;line-height:28px;color:#222">1</div>
<div class="a" style="left:1464px;top:813px;font-size:18px;line-height:28px;color:#333">页</div>
<svg style="left:1500px;top:812px;width:24px;height:30px" viewBox="0 0 24 30"><path d="M7 5.5 L16.5 14.5 L7 23.5" fill="none" stroke="#bbb" stroke-width="1.6"/></svg>
<svg style="left:1538px;top:812px;width:28px;height:30px" viewBox="0 0 28 30"><path d="M18 5.5 V23.5 M7 5.5 L17 14.5 L7 23.5" fill="none" stroke="#bbb" stroke-width="1.6"/></svg>
<div class="a" style="left:1597px;top:813px;font-size:18px;line-height:28px;color:#333">共1页, 6条记录</div>
<div class="a" style="left:235px;top:872px;width:1644px;height:1px;background:#e4f3f6"></div>
<div class="a" style="left:0;top:872px;width:235px;height:1px;background:#dbeff3"></div>
<!--/TBL-->
</body></html>
